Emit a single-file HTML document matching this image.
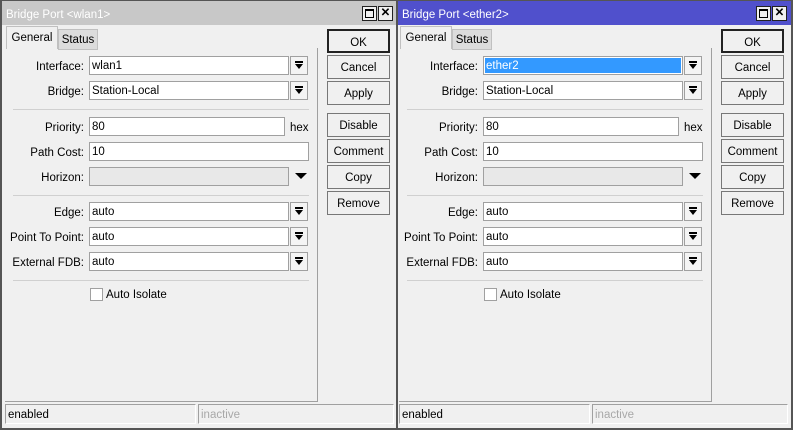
<!DOCTYPE html>
<html><head><meta charset="utf-8"><style>
*{box-sizing:border-box;margin:0;padding:0}
body{width:793px;height:430px;background:#f0f0f0;font-family:"Liberation Sans",sans-serif;font-size:11.5px;line-height:14px;color:#000;position:relative;overflow:hidden;white-space:nowrap}
.win{position:absolute;top:0;height:430px;background:#f0f0f0;border:2px solid #555;border-top:1px solid #555}
.tb{position:absolute;left:0;right:0;top:0;height:24px;background:#c8c8c8;color:#fff;padding:7px 0 0 4px;font-size:11.5px}
.win.act .tb{background:#5050cc}
.tbtn{position:absolute;top:5px;width:15px;height:15px;background:#f0f0f0;border:1px solid #222}
.a{position:absolute}
.tab{position:absolute;height:21px;padding:4px 0 0 0;text-align:center}
.panel{position:absolute;left:3px;top:47px;width:313px;height:354px;border-right:1px solid #a0a0a0;border-bottom:1px solid #a0a0a0}
.lbl{position:absolute;text-align:right;width:80px;left:2px}
.in{position:absolute;left:87px;height:19px;background:#fff;border:1px solid #a0a0a0;padding:2px 0 0 2px;color:#000}
.dd{position:absolute;left:288px;width:18px;height:19px;background:#f4f4f4;border:1px solid #a0a0a0}
.dd:after{content:"";position:absolute;left:4px;top:4px;width:8px;height:2px;background:#000}
.dd:before{content:"";position:absolute;left:4px;top:7px;border-left:4px solid transparent;border-right:4px solid transparent;border-top:5px solid #000}
.sep{position:absolute;left:11px;width:296px;height:1px;background:#d0d0d0}
.btn{position:absolute;left:325px;width:63px;height:24px;border:1px solid #777;background:#f0f0f0;text-align:center;padding-top:5px}
.sb{position:absolute;top:403px;height:20px;border:1px solid #a0a0a0;border-right-color:#fff;border-bottom-color:#fff;padding:3px 0 0 2px}
</style></head><body>

<div class="win" style="left:0;width:398px">
 <div class="tb">Bridge Port &lt;wlan1&gt;</div>
 <div class="tbtn" style="left:360px"><div style="position:absolute;left:2px;top:2px;width:9px;height:9px;border:1px solid #000;border-top-width:2px"></div></div>
 <div class="tbtn" style="left:376px;text-align:center;line-height:13px;font-weight:bold;color:#000">✕</div>
 <div class="panel"></div>
 <div class="tab" style="left:4px;top:25px;width:52px;height:23px;background:#f0f0f0;border:1px solid #c0c0c0;border-bottom:none">General</div>
 <div class="tab" style="left:56px;top:28px;width:40px;background:#dcdcdc;border:1px solid #c0c0c0;padding-top:3px">Status</div>
 <div class="lbl" style="top:59px">Interface:</div><div class="in" style="top:55px;width:200px">wlan1</div><div class="dd" style="top:55px"></div>
 <div class="lbl" style="top:84px">Bridge:</div><div class="in" style="top:80px;width:200px">Station-Local</div><div class="dd" style="top:80px"></div>
 <div class="sep" style="top:108px"></div>
 <div class="lbl" style="top:120px">Priority:</div><div class="in" style="top:116px;width:196px">80</div><div class="a" style="left:288px;top:120px">hex</div>
 <div class="lbl" style="top:145px">Path Cost:</div><div class="in" style="top:141px;width:220px">10</div>
 <div class="lbl" style="top:170px">Horizon:</div><div class="in" style="top:166px;width:200px;background:#e8e8e8"></div><div class="a" style="left:293px;top:172px;border-left:6px solid transparent;border-right:6px solid transparent;border-top:6px solid #000"></div>
 <div class="sep" style="top:194px"></div>
 <div class="lbl" style="top:205px">Edge:</div><div class="in" style="top:201px;width:200px">auto</div><div class="dd" style="top:201px"></div>
 <div class="lbl" style="top:230px">Point To Point:</div><div class="in" style="top:226px;width:200px">auto</div><div class="dd" style="top:226px"></div>
 <div class="lbl" style="top:255px">External FDB:</div><div class="in" style="top:251px;width:200px">auto</div><div class="dd" style="top:251px"></div>
 <div class="sep" style="top:279px"></div>
 <div class="a" style="left:88px;top:287px;width:13px;height:13px;background:#fff;border:1px solid #a0a0a0"></div><div class="a" style="left:104px;top:287px">Auto Isolate</div>
 <div class="btn" style="top:28px;border:2px solid #222">OK</div>
 <div class="btn" style="top:54px">Cancel</div>
 <div class="btn" style="top:80px">Apply</div>
 <div class="btn" style="top:112px">Disable</div>
 <div class="btn" style="top:138px">Comment</div>
 <div class="btn" style="top:164px">Copy</div>
 <div class="btn" style="top:190px">Remove</div>
 <div class="sb" style="left:3px;width:191px">enabled</div>
 <div class="sb" style="left:196px;width:196px;color:#a8a8a8">inactive</div>
</div>

<div class="win act" style="left:396px;width:397px">
 <div class="tb">Bridge Port &lt;ether2&gt;</div>
 <div class="tbtn" style="left:358px"><div style="position:absolute;left:2px;top:2px;width:9px;height:9px;border:1px solid #000;border-top-width:2px"></div></div>
 <div class="tbtn" style="left:374px;text-align:center;line-height:13px;font-weight:bold;color:#000">✕</div>
 <div style="position:absolute;left:-2px;top:0">
 <div class="panel"></div>
 <div class="tab" style="left:4px;top:25px;width:52px;height:23px;background:#f0f0f0;border:1px solid #c0c0c0;border-bottom:none">General</div>
 <div class="tab" style="left:56px;top:28px;width:40px;background:#dcdcdc;border:1px solid #c0c0c0;padding-top:3px">Status</div>
 <div class="lbl" style="top:59px">Interface:</div><div class="in" style="top:55px;width:200px;padding:1px"><span style="display:block;background:#3399ff;color:#fff;height:15px;padding:1px 0 0 1px">ether2</span></div><div class="dd" style="top:55px"></div>
 <div class="lbl" style="top:84px">Bridge:</div><div class="in" style="top:80px;width:200px">Station-Local</div><div class="dd" style="top:80px"></div>
 <div class="sep" style="top:108px"></div>
 <div class="lbl" style="top:120px">Priority:</div><div class="in" style="top:116px;width:196px">80</div><div class="a" style="left:288px;top:120px">hex</div>
 <div class="lbl" style="top:145px">Path Cost:</div><div class="in" style="top:141px;width:220px">10</div>
 <div class="lbl" style="top:170px">Horizon:</div><div class="in" style="top:166px;width:200px;background:#e8e8e8"></div><div class="a" style="left:293px;top:172px;border-left:6px solid transparent;border-right:6px solid transparent;border-top:6px solid #000"></div>
 <div class="sep" style="top:194px"></div>
 <div class="lbl" style="top:205px">Edge:</div><div class="in" style="top:201px;width:200px">auto</div><div class="dd" style="top:201px"></div>
 <div class="lbl" style="top:230px">Point To Point:</div><div class="in" style="top:226px;width:200px">auto</div><div class="dd" style="top:226px"></div>
 <div class="lbl" style="top:255px">External FDB:</div><div class="in" style="top:251px;width:200px">auto</div><div class="dd" style="top:251px"></div>
 <div class="sep" style="top:279px"></div>
 <div class="a" style="left:88px;top:287px;width:13px;height:13px;background:#fff;border:1px solid #a0a0a0"></div><div class="a" style="left:104px;top:287px">Auto Isolate</div>
 <div class="btn" style="top:28px;border:2px solid #222">OK</div>
 <div class="btn" style="top:54px">Cancel</div>
 <div class="btn" style="top:80px">Apply</div>
 <div class="btn" style="top:112px">Disable</div>
 <div class="btn" style="top:138px">Comment</div>
 <div class="btn" style="top:164px">Copy</div>
 <div class="btn" style="top:190px">Remove</div>
 <div class="sb" style="left:3px;width:191px">enabled</div>
 <div class="sb" style="left:196px;width:196px;color:#a8a8a8">inactive</div>
 </div>
</div>
</body></html>
